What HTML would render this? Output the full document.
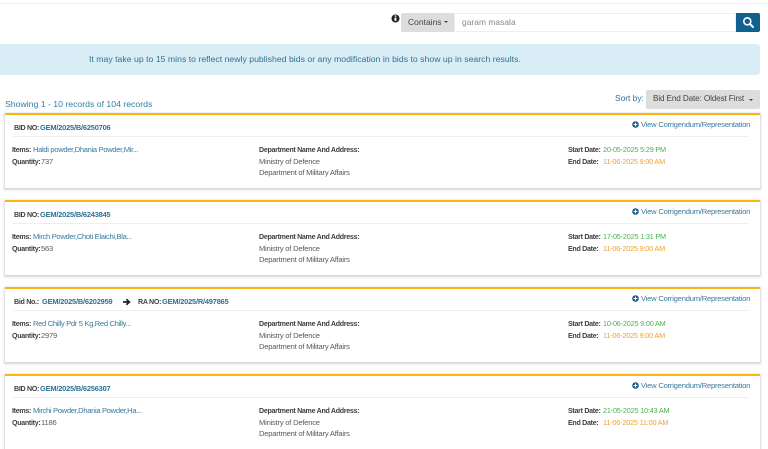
<!DOCTYPE html>
<html><head><meta charset="utf-8">
<style>
html,body{margin:0;padding:0;background:#fff;width:768px;height:446px;overflow:hidden;font-family:"Liberation Sans",sans-serif;}
.a{position:absolute;white-space:nowrap;}
.card{position:absolute;left:5px;width:755px;height:73px;background:#fff;border-top:2px solid #fdb515;box-shadow:0 1px 2px 1px rgba(0,0,0,.17);}
.t{position:absolute;white-space:nowrap;font-size:7.6px;line-height:10px;color:#5a5a5a;letter-spacing:-.22px;}
.b{font-weight:bold;font-size:7.1px;color:#3f3f3f;letter-spacing:-.3px;}
.l{color:#3b7a9e;letter-spacing:-.33px;}
.n{font-weight:bold;font-size:7.4px;color:#2e7095;letter-spacing:-.17px;}
.v{color:#3b7a9e;letter-spacing:-.22px;}
.g{color:#4caf50;font-size:7.3px;letter-spacing:-.2px;}
.o{color:#eea236;font-size:7.3px;letter-spacing:-.2px;}
.hr{position:absolute;left:8px;width:735px;top:21px;height:1px;background:#eee;}
</style></head><body>
<div class="a" style="left:0;top:3px;width:768px;height:1px;background:#f2f2f2"></div>

<svg class="a" style="left:391px;top:14px" width="9" height="9" viewBox="0 0 9 9"><circle cx="4.5" cy="4.5" r="4" fill="#222"/><rect x="3.8" y="1.4" width="1.5" height="1.4" fill="#fff"/><rect x="3.5" y="3.6" width="1.9" height="3.2" fill="#fff"/></svg>
<div class="a" style="left:401px;top:13px;width:53px;height:19px;background:#ddd;border-radius:2px 0 0 2px;font-size:8.5px;line-height:19px;color:#444;text-indent:7px">Contains <span style="display:inline-block;width:0;height:0;border:2px solid transparent;border-top:2.5px solid #444;border-bottom:0;vertical-align:2px"></span></div>
<div class="a" style="left:454px;top:13px;width:282px;height:19px;background:#fff;box-shadow:inset 0 0 0 1px #eee;font-size:8.4px;line-height:18px;color:#888;text-indent:8px;letter-spacing:.05px">garam masala</div>
<div class="a" style="left:736px;top:13px;width:24px;height:19px;background:#11608f;border-radius:0 2px 2px 0"></div>
<svg class="a" style="left:742px;top:16px" width="13" height="13" viewBox="0 0 13 13"><circle cx="5.3" cy="5.3" r="3.5" fill="none" stroke="#fff" stroke-width="1.6"/><path d="M8 8L11 11" stroke="#fff" stroke-width="2" stroke-linecap="round"/></svg>

<div class="a" style="left:0;top:44px;width:760px;height:31px;background:#d9edf7;border-radius:0 3px 3px 0;"></div>
<div class="a" style="left:89px;top:54px;font-size:8.7px;line-height:11px;color:#31708f;letter-spacing:.01px">It may take up to 15 mins to reflect newly published bids or any modification in bids to show up in search results.</div>

<div class="a" style="left:5px;top:98px;font-size:8.7px;line-height:12px;color:#337ea5;">Showing 1 - 10 records of 104 records</div>
<div class="a" style="left:615px;top:93px;font-size:8.4px;line-height:11px;color:#31708f;">Sort by:</div>
<div class="a" style="left:646px;top:90px;width:114px;height:19px;background:#ddd;border-radius:2px;"></div>
<div class="a" style="left:653px;top:90px;font-size:8.2px;line-height:18px;color:#444;letter-spacing:-.14px">Bid End Date: Oldest First</div>
<div class="a" style="left:749px;top:99px;width:0;height:0;border:2px solid transparent;border-top:2.5px solid #444;border-bottom:0"></div>

<!-- Card 1 -->
<div class="card" style="top:113px">
<div class="t b" style="left:9px;top:8px">BID NO:</div>
<div class="t n" style="left:35px;top:8px">GEM/2025/B/6250706</div>
<svg class="a" style="left:627px;top:6px" width="7" height="7" viewBox="0 0 7 7"><circle cx="3.5" cy="3.5" r="3.3" fill="#1c5c86"/><path d="M3.5 1.6V5.4M1.6 3.5H5.4" stroke="#fff" stroke-width="1"/></svg>
<div class="t v" style="left:636px;top:5px">View Corrigendum/Representation</div>
<div class="hr"></div>
<div class="t b" style="left:7px;top:30px">Items:</div>
<div class="t l" style="left:28px;top:30px">Haldi powder,Dhania Powder,Mir...</div>
<div class="t b" style="left:7px;top:42px">Quantity:</div>
<div class="t" style="left:36px;top:42px">737</div>
<div class="t b" style="left:254px;top:30px">Department Name And Address:</div>
<div class="t" style="left:254px;top:42px">Ministry of Defence</div>
<div class="t" style="left:254px;top:53px">Department of Military Affairs</div>
<div class="t b" style="left:563px;top:30px">Start Date:</div>
<div class="t g" style="left:598px;top:30px">20-05-2025 5:29 PM</div>
<div class="t b" style="left:563px;top:42px">End Date:</div>
<div class="t o" style="left:598px;top:42px">11-06-2025 9:00 AM</div>
</div>

<!-- Card 2 -->
<div class="card" style="top:200px">
<div class="t b" style="left:9px;top:8px">BID NO:</div>
<div class="t n" style="left:35px;top:8px">GEM/2025/B/6243845</div>
<svg class="a" style="left:627px;top:6px" width="7" height="7" viewBox="0 0 7 7"><circle cx="3.5" cy="3.5" r="3.3" fill="#1c5c86"/><path d="M3.5 1.6V5.4M1.6 3.5H5.4" stroke="#fff" stroke-width="1"/></svg>
<div class="t v" style="left:636px;top:5px">View Corrigendum/Representation</div>
<div class="hr"></div>
<div class="t b" style="left:7px;top:30px">Items:</div>
<div class="t l" style="left:28px;top:30px">Mirch Powder,Choti Elaichi,Bla...</div>
<div class="t b" style="left:7px;top:42px">Quantity:</div>
<div class="t" style="left:36px;top:42px">563</div>
<div class="t b" style="left:254px;top:30px">Department Name And Address:</div>
<div class="t" style="left:254px;top:42px">Ministry of Defence</div>
<div class="t" style="left:254px;top:53px">Department of Military Affairs</div>
<div class="t b" style="left:563px;top:30px">Start Date:</div>
<div class="t g" style="left:598px;top:30px">17-05-2025 1:31 PM</div>
<div class="t b" style="left:563px;top:42px">End Date:</div>
<div class="t o" style="left:598px;top:42px">11-06-2025 9:00 AM</div>
</div>

<!-- Card 3 -->
<div class="card" style="top:287px">
<div class="t b" style="left:9px;top:8px">Bid No.:</div>
<div class="t n" style="left:37px;top:8px">GEM/2025/B/6202959</div>
<svg class="a" style="left:117px;top:9px" width="9" height="8" viewBox="0 0 9 8"><path d="M1 4H7M4.4 1.2L7.4 4L4.4 6.8" fill="none" stroke="#222" stroke-width="1.7"/></svg>
<div class="t b" style="left:133px;top:8px">RA NO:</div>
<div class="t n" style="left:157px;top:8px">GEM/2025/R/497865</div>
<svg class="a" style="left:627px;top:6px" width="7" height="7" viewBox="0 0 7 7"><circle cx="3.5" cy="3.5" r="3.3" fill="#1c5c86"/><path d="M3.5 1.6V5.4M1.6 3.5H5.4" stroke="#fff" stroke-width="1"/></svg>
<div class="t v" style="left:636px;top:5px">View Corrigendum/Representation</div>
<div class="hr"></div>
<div class="t b" style="left:7px;top:30px">Items:</div>
<div class="t l" style="left:28px;top:30px">Red Chilly Pdr 5 Kg,Red Chilly...</div>
<div class="t b" style="left:7px;top:42px">Quantity:</div>
<div class="t" style="left:36px;top:42px">2979</div>
<div class="t b" style="left:254px;top:30px">Department Name And Address:</div>
<div class="t" style="left:254px;top:42px">Ministry of Defence</div>
<div class="t" style="left:254px;top:53px">Department of Military Affairs</div>
<div class="t b" style="left:563px;top:30px">Start Date:</div>
<div class="t g" style="left:598px;top:30px">10-06-2025 9:00 AM</div>
<div class="t b" style="left:563px;top:42px">End Date:</div>
<div class="t o" style="left:598px;top:42px">11-06-2025 9:00 AM</div>
</div>

<!-- Card 4 -->
<div class="card" style="top:374px">
<div class="t b" style="left:9px;top:8px">BID NO:</div>
<div class="t n" style="left:35px;top:8px">GEM/2025/B/6256307</div>
<svg class="a" style="left:627px;top:6px" width="7" height="7" viewBox="0 0 7 7"><circle cx="3.5" cy="3.5" r="3.3" fill="#1c5c86"/><path d="M3.5 1.6V5.4M1.6 3.5H5.4" stroke="#fff" stroke-width="1"/></svg>
<div class="t v" style="left:636px;top:5px">View Corrigendum/Representation</div>
<div class="hr"></div>
<div class="t b" style="left:7px;top:30px">Items:</div>
<div class="t l" style="left:28px;top:30px">Mirchi Powder,Dhania Powder,Ha...</div>
<div class="t b" style="left:7px;top:42px">Quantity:</div>
<div class="t" style="left:36px;top:42px">1186</div>
<div class="t b" style="left:254px;top:30px">Department Name And Address:</div>
<div class="t" style="left:254px;top:42px">Ministry of Defence</div>
<div class="t" style="left:254px;top:53px">Department of Military Affairs</div>
<div class="t b" style="left:563px;top:30px">Start Date:</div>
<div class="t g" style="left:598px;top:30px">21-05-2025 10:43 AM</div>
<div class="t b" style="left:563px;top:42px">End Date:</div>
<div class="t o" style="left:598px;top:42px">11-06-2025 11:00 AM</div>
</div>
</body></html>
